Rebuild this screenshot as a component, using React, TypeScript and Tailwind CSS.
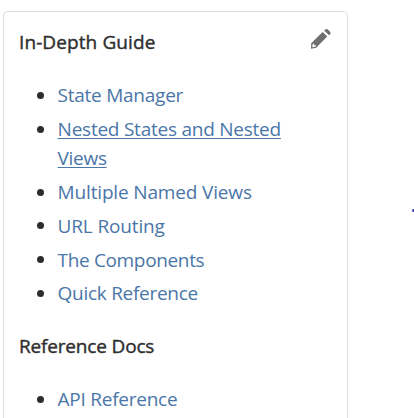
interface GuideLink {
  lines: { text: string; tracking: string }[]
  active?: boolean
}

const GUIDE_LINKS: GuideLink[] = [
  { lines: [{ text: 'State Manager', tracking: 'tracking-[-0.25px]' }] },
  {
    lines: [
      { text: 'Nested States and Nested', tracking: 'tracking-[-0.24px]' },
      { text: 'Views', tracking: 'tracking-[-0.3px]' },
    ],
    active: true,
  },
  { lines: [{ text: 'Multiple Named Views', tracking: 'tracking-[-0.16px]' }] },
  { lines: [{ text: 'URL Routing', tracking: 'tracking-[-0.15px]' }] },
  { lines: [{ text: 'The Components', tracking: 'tracking-[-0.35px]' }] },
  { lines: [{ text: 'Quick Reference', tracking: 'tracking-[-0.28px]' }] },
]

const REFERENCE_LINKS: GuideLink[] = [
  { lines: [{ text: 'API Reference', tracking: 'tracking-[-0.25px]' }] },
]

function PencilIcon() {
  return (
    <svg width="22" height="22" viewBox="0 0 22 22" fill="#6f6f6f">
      <path
        fillRule="evenodd"
        d="M1.2 15.2 12.6 4 17.2 8.6 6.2 19.8 1 20.8ZM2.7 16.1 2.3 19.2 5.7 18.7 5.7 17.3 4.3 17.2 4.1 15.8Z"
      />
      <path d="M14.2 2.6 15.3 1.5Q16.6 .4 17.8 1.5L20.1 3.8Q21.2 5 20.1 6.2L19 7.3Z" />
    </svg>
  )
}

function LinkList({ links }: { links: GuideLink[] }) {
  return (
    <ul className="flex flex-col gap-[4.8px]">
      {links.map(link => (
        <li key={link.lines[0].text} className="flex gap-[14px]">
          <span className="mt-[10.7px] size-[7px] shrink-0 rounded-full bg-[#2c2c2c]" />
          <a
            href="#"
            className={`text-[#4a76a8] ${link.active ? 'underline decoration-1 underline-offset-[2px]' : ''}`}
          >
            {link.lines.map(line => (
              <span key={line.text} className={`block whitespace-nowrap ${line.tracking}`}>
                {line.text}
              </span>
            ))}
          </a>
        </li>
      ))}
    </ul>
  )
}

export default function App() {
  return (
    <div className="flex h-[418px] w-[414px] items-start justify-between overflow-hidden bg-white pl-[3px] pt-[11px] font-['Open_Sans',sans-serif] text-[19px] leading-[29px] text-[#2f2f2f]">
      <aside className="h-[440px] w-[345px] rounded-[5px] border border-[#dcdcdc] pl-[15px] pr-[15px] pt-[16px]">
        <div className="flex items-start justify-between">
          <h4 className="tracking-[0.1px] [-webkit-text-stroke:0.4px_#2f2f2f]">In-Depth Guide</h4>
          <PencilIcon />
        </div>
        <div className="mt-[24.35px] pl-[17.6px]">
          <LinkList links={GUIDE_LINKS} />
        </div>
        <h4 className="mt-[23.65px] tracking-[-0.17px] [-webkit-text-stroke:0.4px_#2f2f2f]">Reference Docs</h4>
        <div className="mt-[24px] pl-[17.6px]">
          <LinkList links={REFERENCE_LINKS} />
        </div>
      </aside>
      <span className="mt-[198px] h-[3px] w-[2px] rounded-l-full bg-[#3c3cae]" />
    </div>
  )
}
